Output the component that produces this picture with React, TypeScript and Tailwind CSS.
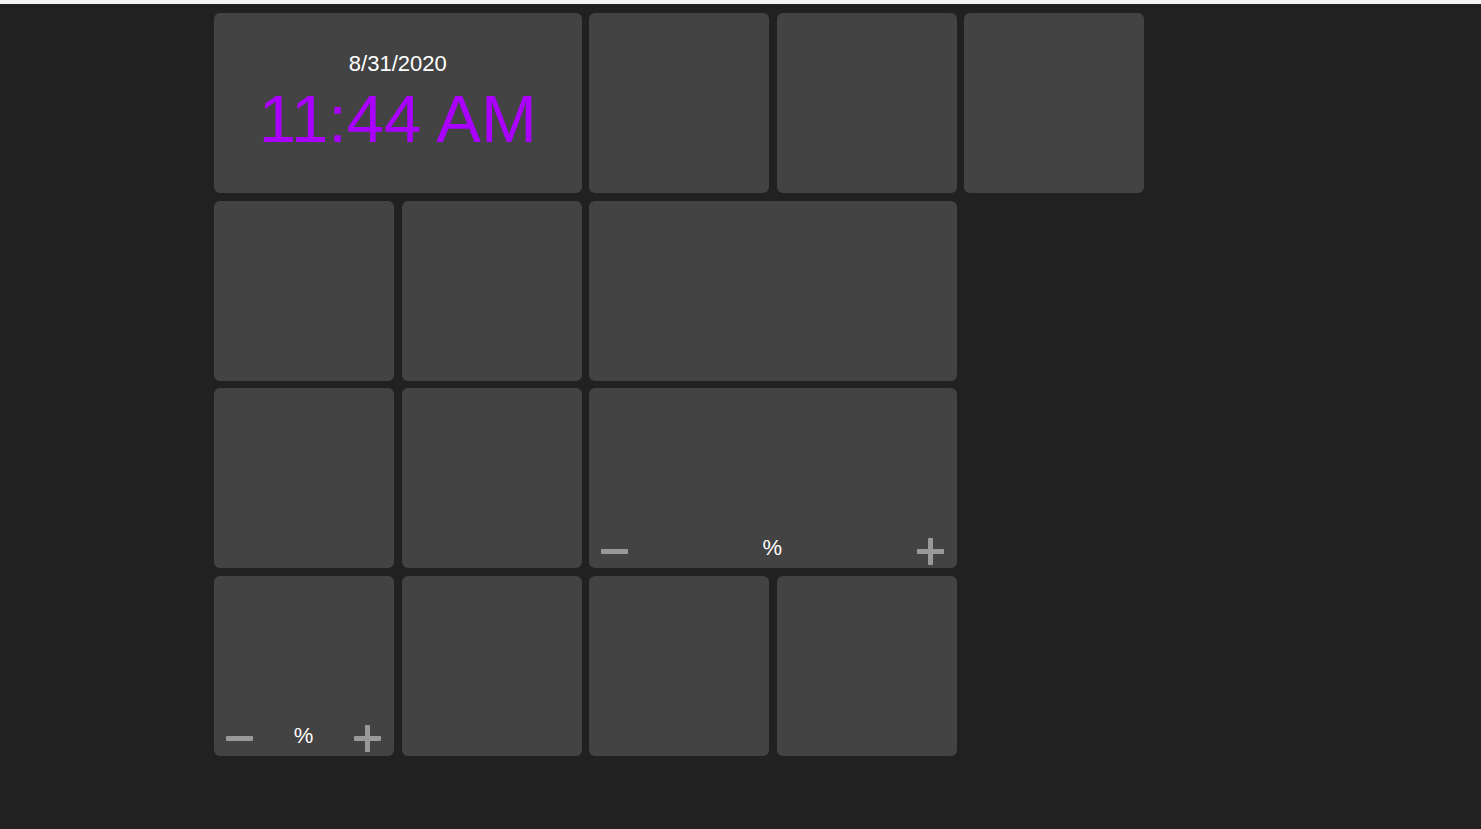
import React from "react";

type Tile = {
  id: string;
  span?: 2;
  newRow?: boolean;
  kind?: "clock" | "dimmer";
};

// 5-column grid; rows 2 and 3 leave the last column empty
const tiles: Tile[] = [
  { id: "clock", span: 2, kind: "clock" },
  { id: "t1" },
  { id: "t2" },
  { id: "t3" },
  { id: "t4", newRow: true },
  { id: "t5" },
  { id: "t6", span: 2 },
  { id: "t7", newRow: true },
  { id: "t8" },
  { id: "t9", span: 2, kind: "dimmer" },
  { id: "t10", newRow: true, kind: "dimmer" },
  { id: "t11" },
  { id: "t12" },
  { id: "t13" },
];

function PlusIcon() {
  return (
    <svg width="27" height="27" viewBox="0 0 27 27" className="shrink-0">
      <rect x="11" y="0" width="5" height="27" rx="1" fill="#999999" />
      <rect x="0" y="11" width="27" height="5" rx="1" fill="#999999" />
    </svg>
  );
}

function Dimmer() {
  return (
    <div className="mt-auto flex items-center justify-between pl-[12px] pr-[13px] pb-[3px]">
      <div className="h-[5px] w-[27px] shrink-0 rounded-[1px] bg-[#999999]" />
      <span className="mb-[6px] text-[22px] leading-none text-white">%</span>
      <PlusIcon />
    </div>
  );
}

function Clock() {
  return (
    <div className="flex flex-col items-center pt-[40px]">
      <div className="text-[22px] leading-none text-white">8/31/2020</div>
      <div className="mt-[10px] text-[67px] leading-none text-[#aa00ff]">11:44 AM</div>
    </div>
  );
}

export default function App() {
  return (
    <div className="min-h-screen bg-[#212121] font-['Liberation_Sans',Arial,sans-serif]">
      <div className="h-[4px] bg-[#f4f4f4]" />
      <div className="ml-[214px] mt-[9px] grid grid-cols-[repeat(5,180px)] auto-rows-[180px] gap-[7.5px]">
        {tiles.map((t) => (
          <div
            key={t.id}
            className={[
              "flex flex-col rounded-[6px] bg-[#434343]",
              t.span === 2 ? "col-span-2" : "",
              t.newRow ? "col-start-1" : "",
            ].join(" ")}
          >
            {t.kind === "clock" && <Clock />}
            {t.kind === "dimmer" && <Dimmer />}
          </div>
        ))}
      </div>
    </div>
  );
}
